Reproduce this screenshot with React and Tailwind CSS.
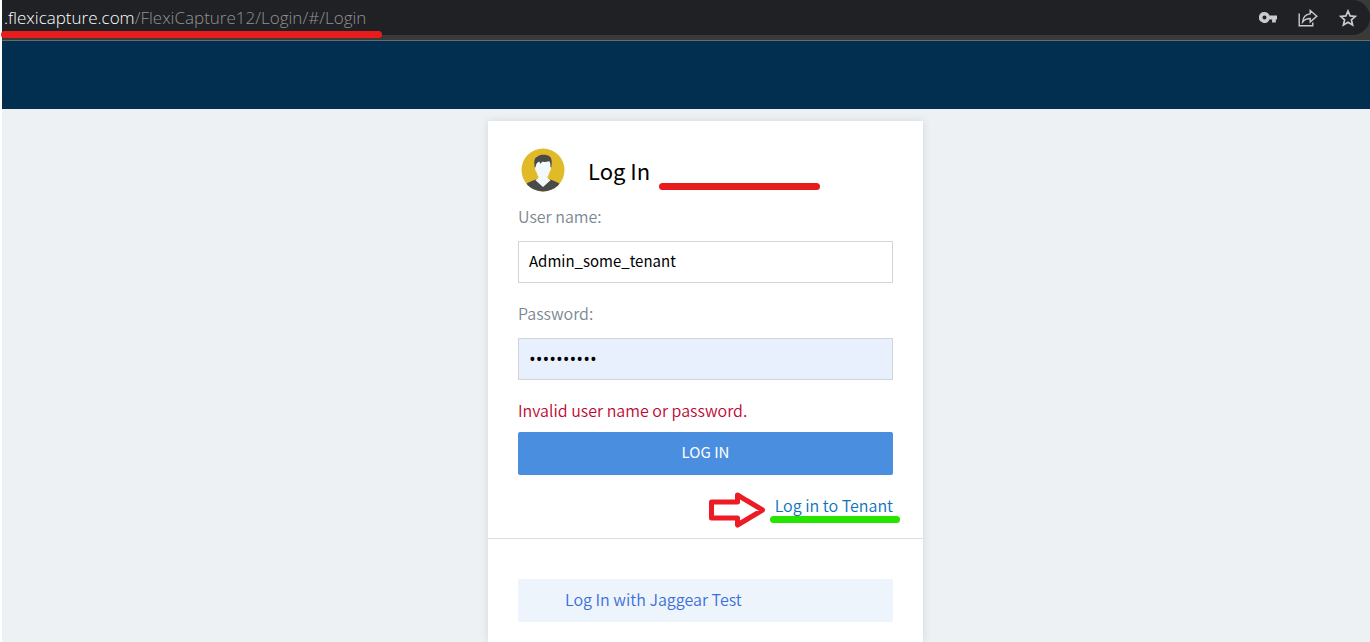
import { useState } from 'react';

const inputClass =
  'block w-full h-[42px] px-[10px] border border-[#cfd6da] text-black outline-none';

function KeyIcon() {
  return (
    <svg width="18" height="11" viewBox="0 0 18 11" fill="#c9cacc" aria-hidden="true">
      <path
        fillRule="evenodd"
        d="M5.500 0a5.500 5.500 0 1 0 5 7.500h2.600V10.500h3.700V7.500H18V3.500h-7.500A5.500 5.500 0 0 0 5.500 0zM5.500 3.500a2 2 0 1 1 0 4 2 2 0 0 1 0-4z"
      />
    </svg>
  );
}

function ShareIcon() {
  return (
    <svg width="20" height="18" viewBox="0 0 20 18" fill="none" stroke="#c9cacc" strokeWidth="1.4" aria-hidden="true">
      <path d="M1.2 4.5v12.3h13.6v-3.3" />
      <path d="M4.6 13c.4-4.800 3-7.700 7.600-8.100V1.500l6.600 5.700-6.600 5.700V9.500c-3.400 0-5.800 1.200-7.600 3.500z" strokeLinejoin="miter" />
    </svg>
  );
}

function StarIcon() {
  return (
    <svg width="18" height="18" viewBox="0 0 18 18" fill="none" stroke="#c9cacc" strokeWidth="1.7" aria-hidden="true">
      <path d="M9 2l2.100 4.900 5.300.450-4 3.450 1.200 5.200L9 13.250 4.400 16l1.200-5.200-4-3.450 5.300-.450z" />
    </svg>
  );
}

function Avatar() {
  return (
    <svg width="44" height="44" viewBox="0 0 44 44" aria-hidden="true">
      <defs>
        <clipPath id="avatar-circle">
          <circle cx="22" cy="22" r="21.500" />
        </clipPath>
      </defs>
      <g clipPath="url(#avatar-circle)">
        <rect width="44" height="44" fill="#e0bb27" />
        <path d="M4 37C7 34 11 33 15 31.500L22 38L29 31.500C33 33 37 34 40 37V44H4Z" fill="#4a4a4a" />
        <path d="M14.500 13L30 13L30 20C29.700 22.500 29.300 23.500 28.500 24C28 26 27.500 27.500 26.500 28.800C26.500 30.500 27.500 31.500 29.500 32.300L22 39L14.500 32.300C16.500 31.500 17.500 30.500 17.500 28.800C16.500 27.500 16 26 15.500 24C14.700 23.500 14.200 22.500 14 20Z" fill="#f1f9fd" />
        <path d="M13.800 19.500C13 14 12.800 10 16.500 8.500C19 6.300 26 6.300 29 8.700C31 10.500 31 14.500 30.300 19.500L29.400 19C29.400 16 29.300 14.500 28.300 13.200C25.500 14 23 14.100 21.300 13.800L19.300 15.800L18.300 13.500C15.500 14.500 14.900 16.500 14.700 19Z" fill="#4a4a4a" />
      </g>
    </svg>
  );
}

function AddressBar() {
  return (
    <header className="relative bg-[#3a3a39] pb-[5px] border-b border-[#6b6a68]">
      <div className="h-[35px] bg-[#202124] rounded-r-full flex items-center justify-between pl-[2px] pr-[13px]">
        <p className="font-['Open_Sans','Noto_Sans',sans-serif] font-[350] text-[17px] leading-6 text-[#929396] whitespace-nowrap">
          <span className="text-white">.flexicapture.com</span>/FlexiCapture12/Login/#/Login
        </p>
        <div className="flex items-center gap-[21px]">
          <button type="button" aria-label="Saved passwords"><KeyIcon /></button>
          <button type="button" aria-label="Share this page"><ShareIcon /></button>
          <button type="button" aria-label="Bookmark this page"><StarIcon /></button>
        </div>
      </div>
      <div className="absolute -left-px top-[31px] w-[381px] h-[7px] rounded-full bg-[#e71d1d]" />
    </header>
  );
}

export default function App() {
  const [userName, setUserName] = useState('Admin_some_tenant');
  const [password, setPassword] = useState('0123456789');

  return (
    <div className="min-h-screen flex flex-col bg-white pl-[2px] font-['Noto_Sans_CJK_SC','Noto_Sans',sans-serif]">
      <AddressBar />
      <div className="h-[68px] bg-[#022e4f]" />

      <main className="flex-1 flex justify-center bg-[#edf1f4] pt-3 pl-[39px]">
        <div className="w-full max-w-[435px] bg-white shadow-[0_0_8px_rgba(0,40,70,0.12)]">
          <form onSubmit={e => e.preventDefault()} className="px-[30px] pt-[27px] pb-[21px] border-b border-[#d9dfe3]">
            <div className="flex items-center gap-[23px] pl-[3px] h-11">
              <Avatar />
              <h1 className="relative text-[22px] leading-8 text-black">
                Log In
                <span className="absolute left-[71px] -bottom-1 w-[161px] h-[7px] rounded-full bg-[#e71d1d]" />
              </h1>
            </div>

            <label htmlFor="user" className="block mt-3 mb-[13px] text-base font-[350] leading-6 text-[#7a8791]">User name:</label>
            <input
              id="user"
              type="text"
              value={userName}
              onChange={e => setUserName(e.target.value)}
              className={`${inputClass} pb-1 bg-white text-[15px]`}
            />

            <label htmlFor="password" className="block mt-[18px] mb-[13px] text-base font-[350] leading-6 text-[#7a8791]">Password:</label>
            <input
              id="password"
              type="password"
              value={password}
              onChange={e => setPassword(e.target.value)}
              className={`${inputClass} bg-[#e8effd] font-['Open_Sans',sans-serif] text-lg`}
            />

            <p className="mt-[18px] mb-[10px] text-base font-[350] leading-6 text-[#bd0734]">Invalid user name or password.</p>
            <button type="submit" className="block w-full h-[43px] pb-[2px] rounded-xs bg-[#4a8ee0] text-[15px] text-white">
              LOG IN
            </button>

            <div className="mt-[18px] flex justify-end">
              <a href="#tenant" className="relative text-base font-[350] leading-6 text-[#0b71bd]">
                Log in to Tenant
                <span className="absolute -left-[5px] -right-[7px] top-[23px] h-[7px] rounded-full bg-[#26e600]" />
                <svg
                  className="absolute right-full mr-[9px] -top-[2px]"
                  width="58" height="38" viewBox="0 0 58 38" fill="none" stroke="#ed1c24" strokeWidth="5" strokeLinejoin="round" aria-hidden="true"
                >
                  <path d="M3.500 11h26V4l25 15-25 15v-7h-26z" />
                </svg>
              </a>
            </div>
          </form>

          <div className="px-[30px] pt-10 pb-5">
            <button type="button" className="block w-full h-[43px] pl-[47px] pb-1 rounded-xs bg-[#edf4fc] text-left text-base font-[350] text-[#3b6fdb]">
              Log In with Jaggear Test
            </button>
          </div>
        </div>
      </main>
    </div>
  );
}
